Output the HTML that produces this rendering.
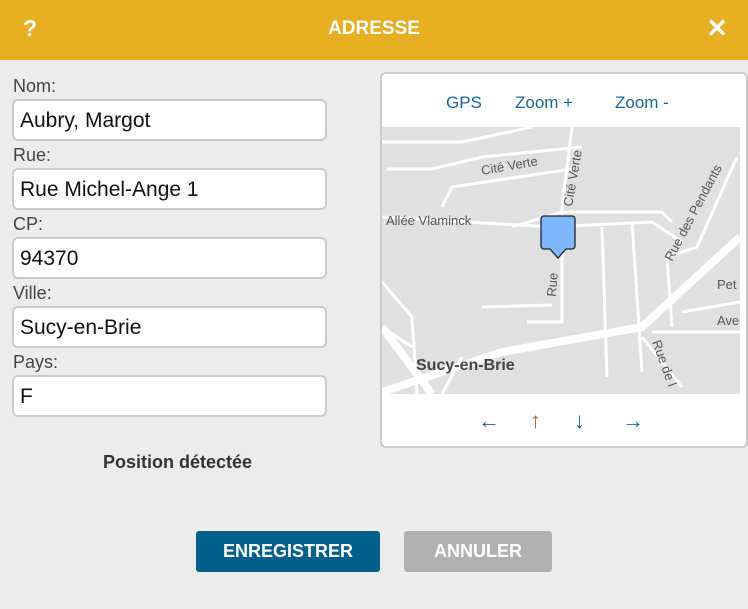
<!DOCTYPE html>
<html><head><meta charset="utf-8"><style>
body{margin:0;width:748px;height:609px;background:#ececec;font-family:"Liberation Sans",sans-serif;position:relative;overflow:hidden}
.hdr{position:absolute;left:0;top:0;width:748px;height:60px;background:#e6ae22;color:#fff;font-weight:bold}
.hdr .t{position:absolute;left:0;right:0;top:18px;text-align:center;font-size:19px}
.hdr .q{position:absolute;left:23px;top:15px;font-size:23px}
.hdr .x{position:absolute;right:20px;top:13px;font-size:26px}
.lbl{position:absolute;left:13px;font-size:18px;color:#444}
.in{position:absolute;left:12px;width:305px;height:38px;background:#fff;border:2px solid #c9cbce;border-radius:6px;font-size:21px;color:#111;line-height:40px;padding-left:6px}
.panel{position:absolute;left:380px;top:72px;width:364px;height:372px;background:#fff;border:2px solid #c8cacc;border-radius:6px;overflow:hidden}
.lnk{position:absolute;top:19px;color:#1a6598;font-size:17px}
.ar{position:absolute;top:334px;color:#1a6598;font-size:22px}
.btn{position:absolute;top:531px;height:41px;color:#fff;font-weight:bold;font-size:18px;line-height:41px;text-align:center;border-radius:3px}
</style></head><body>
<div class="hdr"><span class="q">?</span><div class="t">ADRESSE</div><span class="x">✕</span></div>
<div class="lbl" style="top:76px">Nom:</div><div class="in" style="top:99px">Aubry, Margot</div>
<div class="lbl" style="top:145px">Rue:</div><div class="in" style="top:168px">Rue Michel-Ange 1</div>
<div class="lbl" style="top:214px">CP:</div><div class="in" style="top:237px">94370</div>
<div class="lbl" style="top:283px">Ville:</div><div class="in" style="top:306px">Sucy-en-Brie</div>
<div class="lbl" style="top:352px">Pays:</div><div class="in" style="top:375px">F</div>
<div style="position:absolute;left:103px;top:452px;font-size:18px;font-weight:bold;color:#333">Position détectée</div>
<div class="panel">
<span class="lnk" style="left:64px">GPS</span><span class="lnk" style="left:133px">Zoom +</span><span class="lnk" style="left:233px">Zoom -</span>
<svg style="position:absolute;left:0;top:53px" width="358" height="267" viewBox="0 0 358 267">
<rect width="358" height="267" fill="#e0e0e0"/>
<g stroke="#fff" fill="none" stroke-width="3">
<path d="M0 15 L80 15 L150 0"/><path d="M5 42 L50 42 L100 30 L200 20"/><path d="M60 80 L70 60 L190 42"/>
<path d="M130 100 L180 85 L280 85 L290 95"/><path d="M0 90 L170 100 L270 95 L300 115"/><path d="M145 195 L180 195 L180 80 L190 0"/>
<path d="M220 100 L225 250"/><path d="M250 95 L260 245"/><path d="M285 130 L290 200"/><path d="M355 30 L315 120 L285 130"/>
<path d="M100 180 L170 178"/><path d="M300 185 L358 175"/><path d="M270 205 L358 205"/><path d="M260 210 L300 260"/>
<path d="M30 220 L0 200"/><path d="M0 155 L30 190 L35 267"/><path d="M80 230 L60 267"/>
</g>
<g stroke="#fff" fill="none" stroke-width="8"><path d="M0 265 L120 225 L260 200 L358 110"/><path d="M0 200 L50 267"/></g>
<g fill="#555" font-size="13"><text x="100" y="48" transform="rotate(-10 100 48)">Cité Verte</text><text x="4" y="98">Allée Vlaminck</text>
<text x="190" y="80" transform="rotate(-80 190 80)">Cité Verte</text><text x="160" y="155" transform="rotate(-85 175 155)">Rue</text>
<text x="290" y="135" transform="rotate(-62 290 135)">Rue des Pendants</text><text x="335" y="162">Pet</text><text x="335" y="198">Ave</text>
<text x="270" y="215" transform="rotate(70 270 215)">Rue de l</text>
<text x="34" y="243" font-size="16" font-weight="bold" fill="#444">Sucy-en-Brie</text></g>
<path d="M162 89 h28 a3 3 0 0 1 3 3 v27 a3 3 0 0 1-3 3 h-6 l-8 9 l-8-9 h-6 a3 3 0 0 1-3-3 v-27 a3 3 0 0 1 3-3z" fill="#7fb8ff" stroke="#222" stroke-width="1.3"/>
</svg>
<span class="ar" style="left:96px">←</span><span class="ar" style="left:148px;color:#b06a3a">↑</span><span class="ar" style="left:192px">↓</span><span class="ar" style="left:240px">→</span>
</div>
<div class="btn" style="left:196px;width:184px;background:#005e8a">ENREGISTRER</div>
<div class="btn" style="left:404px;width:148px;background:#b1b1b1">ANNULER</div>
</body></html>
